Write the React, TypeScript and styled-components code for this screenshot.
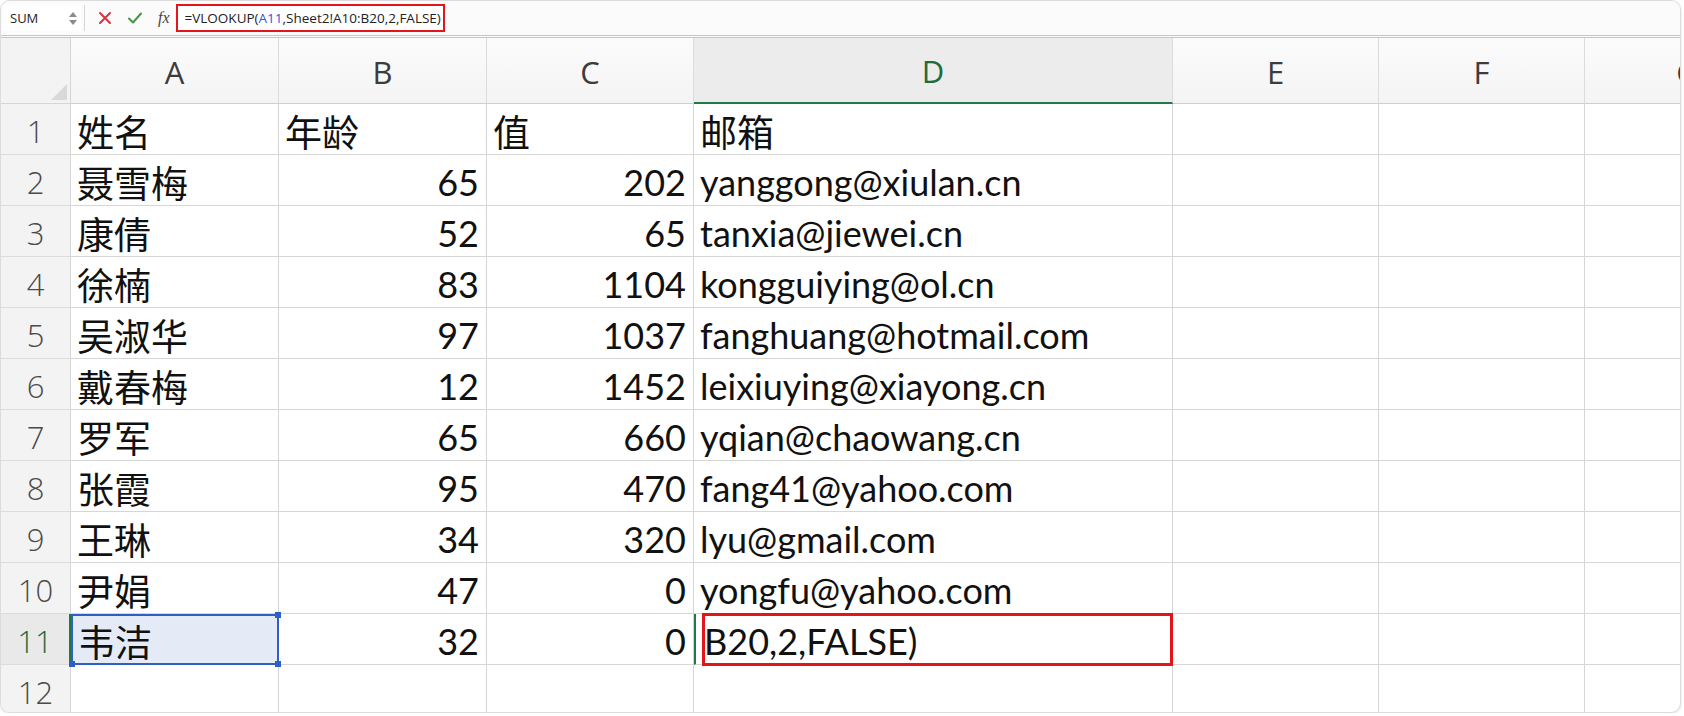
import styled, { createGlobalStyle } from "styled-components";

const GlobalStyle = createGlobalStyle`
  html, body {
    margin: 0;
    padding: 0;
    background: #ffffff;
  }
`;

const Frame = styled.div`
  width: 1681px;
  height: 713px;
  box-sizing: border-box;
  border: 1px solid #dcdcdc;
  border-radius: 10px;
  box-shadow: 0 1px 3px rgba(0, 0, 0, 0.12);
  overflow: hidden;
  background: #fff;
  display: flex;
  flex-direction: column;
`;

const Toolbar = styled.div`
  height: 34px;
  flex-shrink: 0;
  display: flex;
  align-items: center;
  background: #fbfbfb;
  border-bottom: 3px double #c6c6c6;
  font-family: "Open Sans", "Liberation Sans", sans-serif;
  font-size: 13px;
  color: #222;
`;

const NameBox = styled.div`
  width: 78px;
  height: 26px;
  margin-left: 2px;
  box-sizing: border-box;
  background: #fff;
  display: flex;
  align-items: center;
  justify-content: space-between;
  padding: 0 4px 0 7px;
`;

const Spinner = styled.div`
  display: flex;
  flex-direction: column;
  gap: 3px;
`;

const Tri = styled.span<{ $down?: boolean }>`
  width: 0;
  height: 0;
  border-left: 4px solid transparent;
  border-right: 4px solid transparent;
  ${(p) =>
    p.$down ? "border-top: 5px solid #8a8a8a;" : "border-bottom: 5px solid #8a8a8a;"}
`;

const Divider = styled.div`
  width: 1px;
  height: 26px;
  background: #d4d4d4;
  margin: 0 10px 0 3px;
`;

const IconBtn = styled.span`
  display: inline-flex;
  width: 20px;
  justify-content: center;
  margin-right: 10px;
`;

const Fx = styled.span`
  font-family: "Liberation Serif", serif;
  font-style: italic;
  font-size: 16px;
  color: #444;
  margin: 0 6px 0 3px;
`;

const FormulaBox = styled.div`
  width: 269px;
  height: 28px;
  box-sizing: border-box;
  border: 2.5px solid #e4141b;
  display: flex;
  align-items: center;
  padding-left: 7px;
  background: #fff;
  font-size: 13.5px;
  white-space: nowrap;
`;

const Ref = styled.span`
  color: #2a5bd7;
`;

const Grid = styled.div`
  display: grid;
  grid-template-columns: 70px 208px 208px 207px 479px 206px 206px 206px;
  grid-template-rows: 66px repeat(12, 51px);
  font-family: Lato, "Noto Sans CJK SC", sans-serif;
`;

const Corner = styled.div`
  position: relative;
  background: #f3f3f3;
  border-right: 1px solid #d6d6d6;
  border-bottom: 1px solid #d6d6d6;
  &::after {
    content: "";
    position: absolute;
    right: 3px;
    bottom: 3px;
    border-left: 16px solid transparent;
    border-bottom: 16px solid #d9d9d9;
  }
`;

const ColHead = styled.div<{ $active?: boolean }>`
  display: flex;
  align-items: center;
  justify-content: center;
  padding-top: 2px;
  box-sizing: border-box;
  font-family: "Open Sans", "Liberation Sans", sans-serif;
  font-size: 31px;
  color: ${(p) => (p.$active ? "#1f6b3a" : "#3c3c3c")};
  background: ${(p) =>
    p.$active ? "#ececec" : "linear-gradient(#fbfbfb, #f4f4f4)"};
  border-right: 1px solid #dcdcdc;
  border-bottom: ${(p) => (p.$active ? "2px solid #1f7a45" : "1px solid #cfcfcf")};
`;

const RowHead = styled.div<{ $active?: boolean }>`
  display: flex;
  align-items: center;
  justify-content: center;
  padding-top: 4px;
  box-sizing: border-box;
  font-family: "Open Sans", "Liberation Sans", sans-serif;
  font-weight: 300;
  font-size: 31px;
  color: ${(p) => (p.$active ? "#1f6b3a" : "#4a4a4a")};
  background: ${(p) => (p.$active ? "#e9e9e9" : "#f3f3f3")};
  border-bottom: 1px solid #dcdcdc;
  border-right: ${(p) => (p.$active ? "2px solid #1f7a45" : "1px solid #d6d6d6")};
`;

const Cell = styled.div<{ $num?: boolean }>`
  display: flex;
  align-items: center;
  justify-content: ${(p) => (p.$num ? "flex-end" : "flex-start")};
  padding: 4px 7px 0 6px;
  box-sizing: border-box;
  font-size: 36px;
  color: #111;
  white-space: nowrap;
  overflow: visible;
  border-right: 1px solid #d6d6d6;
  border-bottom: 1px solid #d6d6d6;
`;

const Cjk = styled.span`
  font-family: "Noto Sans CJK SC", sans-serif;
  font-size: 37px;
  line-height: 1;
`;

const Selected = styled(Cell)`
  position: relative;
  background: #e4ebf7;
  border: 2px solid #2f5ec4;
  padding-left: 5px;
  i {
    position: absolute;
    width: 6px;
    height: 6px;
    background: #2f5ec4;
  }
`;

const Editing = styled(Cell)`
  position: relative;
  border-left: 2px solid #1f7a45;
  border-right: 2px solid #1f7a45;
  padding-left: 8px;
  &::after {
    content: "";
    position: absolute;
    left: 6px;
    right: -2px;
    top: -1px;
    bottom: -2px;
    border: 3px solid #e4141b;
    pointer-events: none;
  }
`;

const rows: [string, string, string, string][] = [
  ["聂雪梅", "65", "202", "yanggong@xiulan.cn"],
  ["康倩", "52", "65", "tanxia@jiewei.cn"],
  ["徐楠", "83", "1104", "kongguiying@ol.cn"],
  ["吴淑华", "97", "1037", "fanghuang@hotmail.com"],
  ["戴春梅", "12", "1452", "leixiuying@xiayong.cn"],
  ["罗军", "65", "660", "yqian@chaowang.cn"],
  ["张霞", "95", "470", "fang41@yahoo.com"],
  ["王琳", "34", "320", "lyu@gmail.com"],
  ["尹娟", "47", "0", "yongfu@yahoo.com"],
];

const cols = ["A", "B", "C", "D", "E", "F", "G"];

function Empty() {
  return (
    <>
      <Cell />
      <Cell />
      <Cell />
    </>
  );
}

export default function App() {
  return (
    <>
      <GlobalStyle />
      <Frame>
        <Toolbar>
          <NameBox>
            SUM
            <Spinner>
              <Tri />
              <Tri $down />
            </Spinner>
          </NameBox>
          <Divider />
          <IconBtn>
            <svg width="14" height="14" viewBox="0 0 14 14">
              <path d="M2 2 L12 12 M12 2 L2 12" stroke="#d8323a" strokeWidth="2" strokeLinecap="round" />
            </svg>
          </IconBtn>
          <IconBtn>
            <svg width="16" height="14" viewBox="0 0 16 14">
              <path d="M2 7.5 L6 11.5 L14 2.5" stroke="#3f9b43" strokeWidth="2" fill="none" strokeLinecap="round" strokeLinejoin="round" />
            </svg>
          </IconBtn>
          <Fx>fx</Fx>
          <FormulaBox>
            =VLOOKUP(<Ref>A11</Ref>,Sheet2!A10:B20,2,FALSE)
          </FormulaBox>
        </Toolbar>
        <Grid>
          <Corner />
          {cols.map((c) => (
            <ColHead key={c} $active={c === "D"}>
              {c}
            </ColHead>
          ))}

          <RowHead>1</RowHead>
          <Cell><Cjk>姓名</Cjk></Cell>
          <Cell><Cjk>年龄</Cjk></Cell>
          <Cell><Cjk>值</Cjk></Cell>
          <Cell><Cjk>邮箱</Cjk></Cell>
          <Empty />

          {rows.map((r, i) => (
            <>
              <RowHead key={`h${i}`}>{i + 2}</RowHead>
              <Cell><Cjk>{r[0]}</Cjk></Cell>
              <Cell $num>{r[1]}</Cell>
              <Cell $num>{r[2]}</Cell>
              <Cell>{r[3]}</Cell>
              <Empty />
            </>
          ))}

          <RowHead $active>11</RowHead>
          <Selected>
            <Cjk>韦洁</Cjk>
            <i style={{ right: -4, top: -4 }} />
            <i style={{ right: -4, bottom: -4 }} />
            <i style={{ left: -4, bottom: -4 }} />
          </Selected>
          <Cell $num>32</Cell>
          <Cell $num>0</Cell>
          <Editing>B20,2,FALSE)</Editing>
          <Empty />

          <RowHead>12</RowHead>
          <Cell />
          <Cell />
          <Cell />
          <Cell />
          <Empty />
        </Grid>
      </Frame>
    </>
  );
}
